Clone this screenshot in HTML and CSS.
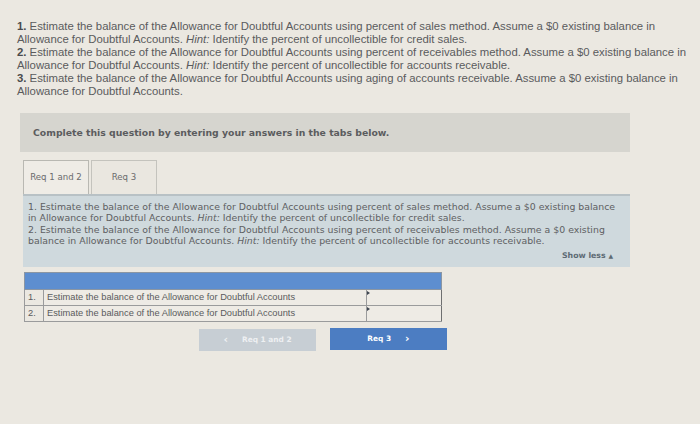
FILE: index.html
```html
<!DOCTYPE html>
<html>
<head>
<meta charset="utf-8">
<link rel="stylesheet" href="styles.css">
</head>
<body>
<div class="page">
  <div class="intro">
    <b>1.</b> Estimate the balance of the Allowance for Doubtful Accounts using percent of sales method. Assume a $0 existing balance in<br>
    Allowance for Doubtful Accounts. <i>Hint:</i> Identify the percent of uncollectible for credit sales.<br>
    <b>2.</b> Estimate the balance of the Allowance for Doubtful Accounts using percent of receivables method. Assume a $0 existing balance in<br>
    Allowance for Doubtful Accounts. <i>Hint:</i> Identify the percent of uncollectible for accounts receivable.<br>
    <b>3.</b> Estimate the balance of the Allowance for Doubtful Accounts using aging of accounts receivable. Assume a $0 existing balance in<br>
    Allowance for Doubtful Accounts.
  </div>

  <div class="notice">Complete this question by entering your answers in the tabs below.</div>

  <div class="work">
    <div class="tabs">
      <div class="tab active">Req 1 and 2</div>
      <div class="tab">Req 3</div>
    </div>
    <div class="panel">
      <div class="panel-text">
        1. Estimate the balance of the Allowance for Doubtful Accounts using percent of sales method. Assume a $0 existing balance<br>
        in Allowance for Doubtful Accounts. <i>Hint:</i> Identify the percent of uncollectible for credit sales.<br>
        2. Estimate the balance of the Allowance for Doubtful Accounts using percent of receivables method. Assume a $0 existing<br>
        balance in Allowance for Doubtful Accounts. <i>Hint:</i> Identify the percent of uncollectible for accounts receivable.
      </div>
      <div class="show-less">Show less <span class="tri">&#9650;</span></div>
    </div>

    <table class="answers">
      <tr class="head"><td colspan="3"></td></tr>
      <tr>
        <td class="num">1.</td>
        <td class="desc">Estimate the balance of the Allowance for Doubtful Accounts</td>
        <td class="inp"><span class="mark"></span></td>
      </tr>
      <tr>
        <td class="num">2.</td>
        <td class="desc">Estimate the balance of the Allowance for Doubtful Accounts</td>
        <td class="inp"><span class="mark"></span></td>
      </tr>
    </table>

    <div class="nav">
      <div class="btn prev"><span class="chev">&lsaquo;</span>Req 1 and 2</div>
      <div class="btn next">Req 3<span class="chev">&rsaquo;</span></div>
    </div>
  </div>
</div>
</body>
</html>
```

FILE: styles.css
```css
html, body {
  margin: 0;
  padding: 0;
}
body {
  background: #ebe8e1;
  width: 700px;
  height: 424px;
  overflow: hidden;
}
.page {
  padding-top: 20px;
}
.intro {
  font-family: "Liberation Sans", Arial, sans-serif;
  font-size: 11.35px;
  line-height: 13.1px;
  color: #5a5b5d;
  padding-left: 17px;
  white-space: nowrap;
}
.intro b {
  color: #4a4b4d;
}
.notice {
  margin: 14px 70px 0 20px;
  height: 39px;
  background: #d6d5cf;
  font-family: "DejaVu Sans", Verdana, sans-serif;
  font-weight: bold;
  font-size: 9.3px;
  color: #5b5c5e;
  display: flex;
  align-items: center;
  padding-left: 13px;
  box-sizing: border-box;
}
.work {
  margin: 8px 70px 0 23px;
}
.tabs {
  display: flex;
  gap: 2px;
  height: 34px;
}
.tab {
  width: 66px;
  box-sizing: border-box;
  border: 1px solid #c4c3bd;
  border-bottom: none;
  font-family: "DejaVu Sans", Verdana, sans-serif;
  font-size: 8.6px;
  color: #6a6b6d;
  display: flex;
  align-items: center;
  justify-content: center;
  background: #eae7e0;
}
.tab.active {
  background: #efece6;
  border-color: #b9b8b2;
}
.panel {
  background: #cfd9dd;
  border-top: 2px solid #b8c1c5;
  height: 73px;
  box-sizing: border-box;
  padding: 5px 0 0 5px;
  position: relative;
}
.panel-text {
  font-family: "DejaVu Sans", Verdana, sans-serif;
  font-size: 9.35px;
  line-height: 11.6px;
  color: #5e6062;
  white-space: nowrap;
}
.show-less {
  text-align: right;
  padding-right: 17px;
  margin-top: 4px;
  font-family: "DejaVu Sans", Verdana, sans-serif;
  font-weight: bold;
  font-size: 7.8px;
  color: #5d6a74;
}
.show-less .tri {
  font-size: 6px;
}
.answers {
  margin-top: 5px;
  margin-left: 1px;
  border-collapse: collapse;
  width: 418px;
  font-family: "Liberation Sans", Arial, sans-serif;
  font-size: 9.3px;
  color: #5a5b5d;
}
.answers td {
  border: 1px solid #9a9b9c;
  padding: 0;
  height: 15px;
}
.answers .head td {
  background: #5d8ed0;
  height: 16px;
  border-color: #8b96a3;
}
.answers .num {
  width: 19px;
  padding-left: 3px;
  box-sizing: border-box;
}
.answers .desc {
  padding-left: 3px;
  background: #eeebe5;
}
.answers .inp {
  width: 74px;
  position: relative;
  background: #eeebe5;
  border-left: 1.5px solid #6e6f70;
  border-right: 1.5px solid #6e6f70;
}
.answers .mark {
  position: absolute;
  left: 0;
  top: 1px;
  width: 0;
  height: 0;
  border-top: 2.5px solid transparent;
  border-bottom: 2.5px solid transparent;
  border-left: 3px solid #3e4550;
}
.nav {
  display: flex;
  margin-top: 7px;
  margin-left: 176px;
  gap: 14px;
}
.btn {
  width: 117px;
  height: 22px;
  display: flex;
  align-items: center;
  justify-content: center;
  font-family: "DejaVu Sans", Verdana, sans-serif;
  font-weight: bold;
  font-size: 7.4px;
  color: #fff;
}
.btn.prev {
  background: #c7ced4;
  color: #eef0f2;
}
.btn.prev .chev {
  margin-right: 14px;
  font-size: 11px;
}
.btn.next {
  background: #4c7dc2;
  margin-top: -1px;
}
.btn.next .chev {
  margin-left: 14px;
  font-size: 11px;
}
```
